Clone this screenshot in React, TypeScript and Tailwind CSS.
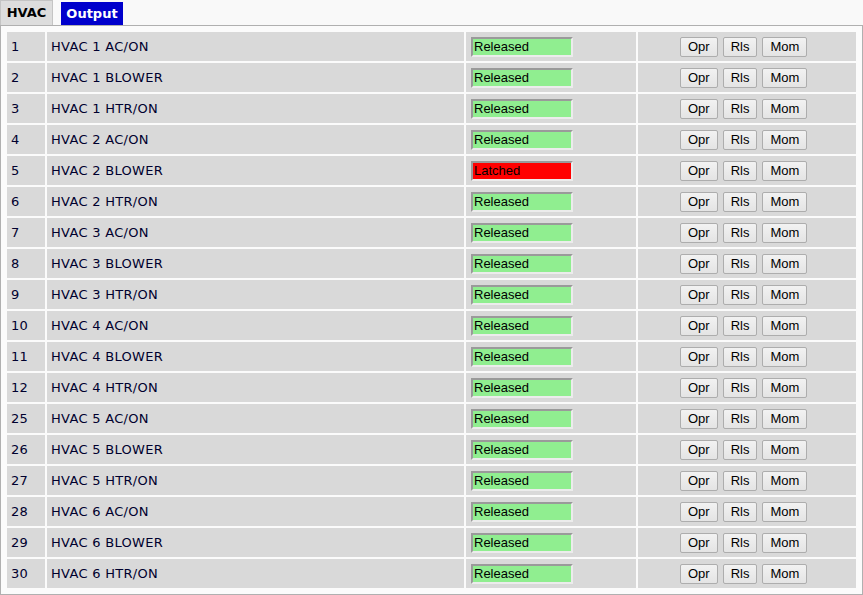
import React from 'react';

type Output = { id: number; name: string; latched: boolean };

const outputs: Output[] = [
  { id: 1, name: 'HVAC 1 AC/ON', latched: false },
  { id: 2, name: 'HVAC 1 BLOWER', latched: false },
  { id: 3, name: 'HVAC 1 HTR/ON', latched: false },
  { id: 4, name: 'HVAC 2 AC/ON', latched: false },
  { id: 5, name: 'HVAC 2 BLOWER', latched: true },
  { id: 6, name: 'HVAC 2 HTR/ON', latched: false },
  { id: 7, name: 'HVAC 3 AC/ON', latched: false },
  { id: 8, name: 'HVAC 3 BLOWER', latched: false },
  { id: 9, name: 'HVAC 3 HTR/ON', latched: false },
  { id: 10, name: 'HVAC 4 AC/ON', latched: false },
  { id: 11, name: 'HVAC 4 BLOWER', latched: false },
  { id: 12, name: 'HVAC 4 HTR/ON', latched: false },
  { id: 25, name: 'HVAC 5 AC/ON', latched: false },
  { id: 26, name: 'HVAC 5 BLOWER', latched: false },
  { id: 27, name: 'HVAC 5 HTR/ON', latched: false },
  { id: 28, name: 'HVAC 6 AC/ON', latched: false },
  { id: 29, name: 'HVAC 6 BLOWER', latched: false },
  { id: 30, name: 'HVAC 6 HTR/ON', latched: false },
];

const CtlButton: React.FC<{ label: string }> = ({ label }) => (
  <button className="h-[20px] px-[7px] border border-[#adadad] rounded-[2px] bg-gradient-to-b from-[#f2f2f2] to-[#e4e4e4] text-[13px] leading-none text-black [font-family:'Liberation_Sans',Arial,sans-serif]">
    {label}
  </button>
);

export default function App() {
  return (
    <div className="w-[863px] h-[595px] bg-[#f9f9f9] [font-family:'DejaVu_Sans',Verdana,sans-serif]">
      {/* Tabs */}
      <div className="flex items-end h-[25px] gap-[8px]">
        <div className="h-[25px] w-[53px] flex items-center justify-center bg-[#dddddd] border border-b-0 border-[#c4c4c4] text-[13px] font-bold text-black">
          HVAC
        </div>
        <div className="h-[23px] w-[62px] flex items-center justify-center bg-[#0000cc] text-[13px] font-bold text-white">
          Output
        </div>
      </div>

      {/* Panel */}
      <div className="h-[570px] border border-[#b0b0b0] bg-[#fbfbfb] px-[4px] pt-[4px]">
        <table className="border-separate border-spacing-[2px] w-[853px] table-fixed text-[13px] tracking-[0.3px] text-[#00002e]">
          <colgroup>
            <col className="w-[38px]" />
            <col className="w-[417px]" />
            <col className="w-[170px]" />
            <col className="w-[218px]" />
          </colgroup>
          <tbody>
            {outputs.map((o) => (
              <tr key={o.id} className="h-[29px]">
                <td className="bg-[#d9d9d9] pl-[4px] p-0">{o.id}</td>
                <td className="bg-[#d9d9d9] pl-[4px] p-0">{o.name}</td>
                <td className="bg-[#d9d9d9] p-0 pl-[5px]">
                  <div
                    className={`w-[102px] h-[20px] border-2 border-t-[#9a9a9a] border-l-[#9a9a9a] border-b-[#ececec] border-r-[#ececec] flex items-center pl-[1px] text-[13px] tracking-normal text-black [font-family:'Liberation_Sans',Arial,sans-serif] ${
                      o.latched ? 'bg-[#ff0000]' : 'bg-[#90ee90]'
                    }`}
                  >
                    {o.latched ? 'Latched' : 'Released'}
                  </div>
                </td>
                <td className="bg-[#d9d9d9] p-0 pl-[42px] tracking-normal">
                  <div className="flex gap-[5px]">
                    <CtlButton label="Opr" />
                    <CtlButton label="Rls" />
                    <CtlButton label="Mom" />
                  </div>
                </td>
              </tr>
            ))}
          </tbody>
        </table>
      </div>
    </div>
  );
}
